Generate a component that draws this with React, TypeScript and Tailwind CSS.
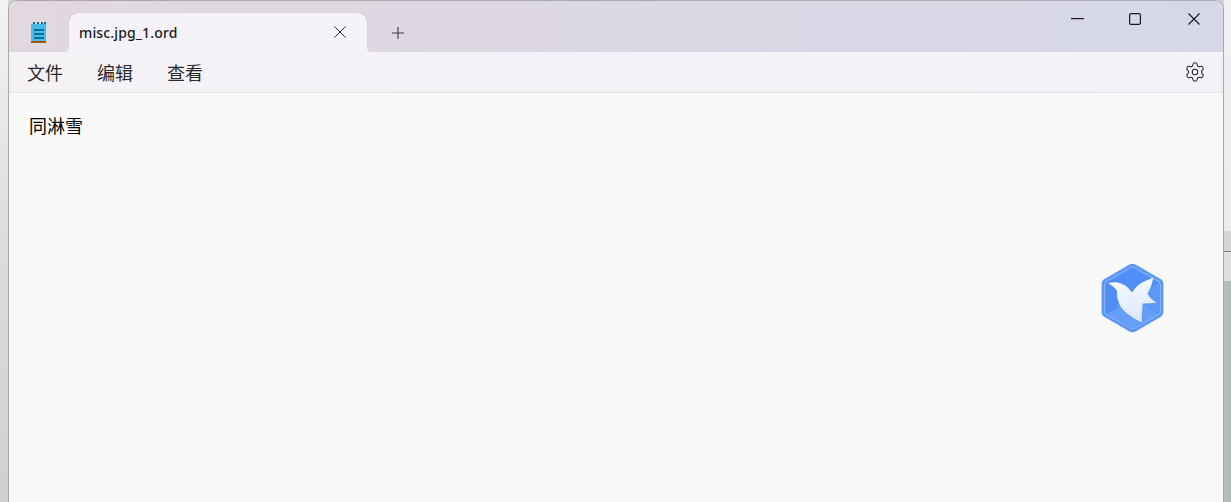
import { Settings } from "lucide-react";

const NotepadIcon = () => (
  <svg width="18" height="22" viewBox="0 0 18 22">
    <rect x="3" y="0" width="2" height="4" fill="#0b6f8f" />
    <rect x="7" y="0" width="2" height="4" fill="#0b6f8f" />
    <rect x="11" y="0" width="2" height="4" fill="#0b6f8f" />
    <rect x="14" y="0" width="2" height="4" fill="#0b6f8f" />
    <rect x="1" y="2" width="15" height="17" rx="1" fill="#45bde6" />
    <rect x="4" y="7" width="10" height="2" fill="#0a6f96" />
    <rect x="4" y="11" width="10" height="2" fill="#0a6f96" />
    <rect x="4" y="15" width="10" height="2" fill="#0a6f96" />
    <rect x="1" y="19" width="15" height="2" fill="#a8540f" />
  </svg>
);

const BirdLogo = () => (
  <svg width="65" height="73" viewBox="0 0 64 72">
    <defs>
      <linearGradient id="bird" x1="0" y1="0" x2="0.3" y2="1">
        <stop offset="0" stopColor="#fbfcff" />
        <stop offset="1" stopColor="#dde8fb" />
      </linearGradient>
    </defs>
    <path
      d="M29 2.5 Q32 1 35 2.5 L60 17 Q62.5 18.5 62.5 21.5 L62.5 49.5 Q62.5 52.5 60 54 L35 68.5 Q32 70 29 68.5 L4 54 Q1.5 52.5 1.5 49.5 L1.5 21.5 Q1.5 18.5 4 17 Z"
      fill="#5c97f8"
    />
    <path
      d="M30 5.5 Q32 4.5 34 5.5 L58 19.5 Q59.5 20.5 59.5 22.5 L59.5 48.5 Q59.5 50.5 58 51.5 L34 65.5 Q32 66.5 30 65.5 L6 51.5 Q4.5 50.5 4.5 48.5 L4.5 22.5 Q4.5 20.5 6 19.5 Z"
      fill="#4f8ef6"
      stroke="#8db9fc"
      strokeWidth="1"
    />
    <path d="M32 36 L59 20.5 L59 50.5 Z" fill="#6da3f9" opacity="0.5" />
    <path d="M32 36 L58 51.5 L32 66 L6 51.5 Z" fill="#6fa5fa" opacity="0.7" />
    <path
      d="M8 21 Q15 19 20 21 Q26 23 29 27 L31.5 30 Q37 22 43 19.5 Q48 17 52.7 15.3 Q51 24 46.7 31.5 Q50 37 55.7 40.3 Q48 41 42 41 Q41 50 41 59.7 Q33 56 27 51 Q20 46 18 39 Q16 33 17 29 Q14 24 8 21 Z"
      fill="url(#bird)"
    />
  </svg>
);

export default function App() {
  return (
    <div className="flex h-[502px] w-[1231px] overflow-hidden bg-[#d2d2d2] font-['Noto_Sans','Noto_Sans_CJK_SC',sans-serif]">
      <div className="w-[8px] shrink-0 bg-gradient-to-b from-[#f3f3f3] via-[#dcdcdc] to-[#d0d0d0]" />

      <div className="relative flex w-[1216px] shrink-0 flex-col overflow-hidden rounded-t-[9px] border-x border-t border-[#a9a9a9] bg-[#f9f9f9]">
        <div className="flex h-[51px] shrink-0 items-end bg-gradient-to-r from-[#e2d8df] to-[#d6d8e9]">
          <div className="mb-[8px] flex w-[60px] justify-center">
            <NotepadIcon />
          </div>
          <div className="relative flex h-[39px] w-[298px] items-center rounded-t-[9px] bg-[#f5f3f7] pb-[1px] pl-[10px] pr-[21px] shadow-[0_0_1px_rgba(0,0,0,0.25)]">
            <div className="absolute bottom-0 left-[-4px] h-[4px] w-[4px] bg-[#f5f3f7]">
              <div className="h-full w-full rounded-br-[4px] bg-[#e2d9e0]" />
            </div>
            <span className="flex-1 text-[14px] font-medium tracking-[0.15px] text-[#1c1c1c]">misc.jpg_1.ord</span>
            <svg width="12" height="12" viewBox="0 0 12 12" stroke="#2a2a2a" strokeWidth="1">
              <path d="M0.5 0.5 L11.5 11.5 M11.5 0.5 L0.5 11.5" />
            </svg>
            <div className="absolute bottom-0 right-[-4px] h-[4px] w-[4px] bg-[#f5f3f7]">
              <div className="h-full w-full rounded-bl-[4px] bg-[#e0d9e3]" />
            </div>
          </div>
          <div className="mb-[13px] ml-[25px]">
            <svg width="12" height="12" viewBox="0 0 12 12" stroke="#3a3a3a" strokeWidth="1.1">
              <path d="M6 0 V12 M0 6 H12" />
            </svg>
          </div>
          <div className="ml-auto flex h-full items-start pt-[12px] pr-[23px]">
            <svg className="mt-[5px]" width="13" height="2" viewBox="0 0 13 2">
              <rect width="13" height="1.2" fill="#1a1a1a" />
            </svg>
            <svg className="ml-[45px]" width="12" height="12" viewBox="0 0 12 12" fill="none" stroke="#1a1a1a" strokeWidth="1.2">
              <rect x="0.6" y="0.6" width="10.8" height="10.8" rx="1.5" />
            </svg>
            <svg className="ml-[47px]" width="12" height="12" viewBox="0 0 12 12" stroke="#1a1a1a" strokeWidth="1.1">
              <path d="M0.5 0.5 L11.5 11.5 M11.5 0.5 L0.5 11.5" />
            </svg>
          </div>
        </div>

        <div className="flex h-[41px] shrink-0 items-center border-b border-[#e5e5e8] bg-gradient-to-r from-[#f5f2f6] to-[#f2f3f9] pl-[18px] pr-[17px] text-[18px] text-[#2a2a2a]">
          <span className="pt-[2px]">文件</span>
          <span className="ml-[34px] pt-[2px]">编辑</span>
          <span className="ml-[34px] pt-[2px]">查看</span>
          <Settings className="ml-auto" size={22} strokeWidth={1.1} color="#222" />
        </div>

        <div className="flex-1 pl-[20px] pt-[20px] text-[18px] leading-[27px] text-black">同淋雪</div>

        <div className="absolute left-[1091px] top-[261px]">
          <BirdLogo />
        </div>
      </div>

      <div className="flex flex-1 flex-col">
        <div className="h-[231px] bg-gradient-to-b from-[#f1f1f1] to-[#ebebeb]" />
        <div className="h-[20px] bg-[#d5d5d5]" />
        <div className="h-px bg-[#7d7d7d]" />
        <div className="h-[29px] bg-[#dedede]" />
        <div className="flex-1 bg-gradient-to-r from-[#bdbdbd] to-[#a9bcbf]" />
      </div>
    </div>
  );
}
